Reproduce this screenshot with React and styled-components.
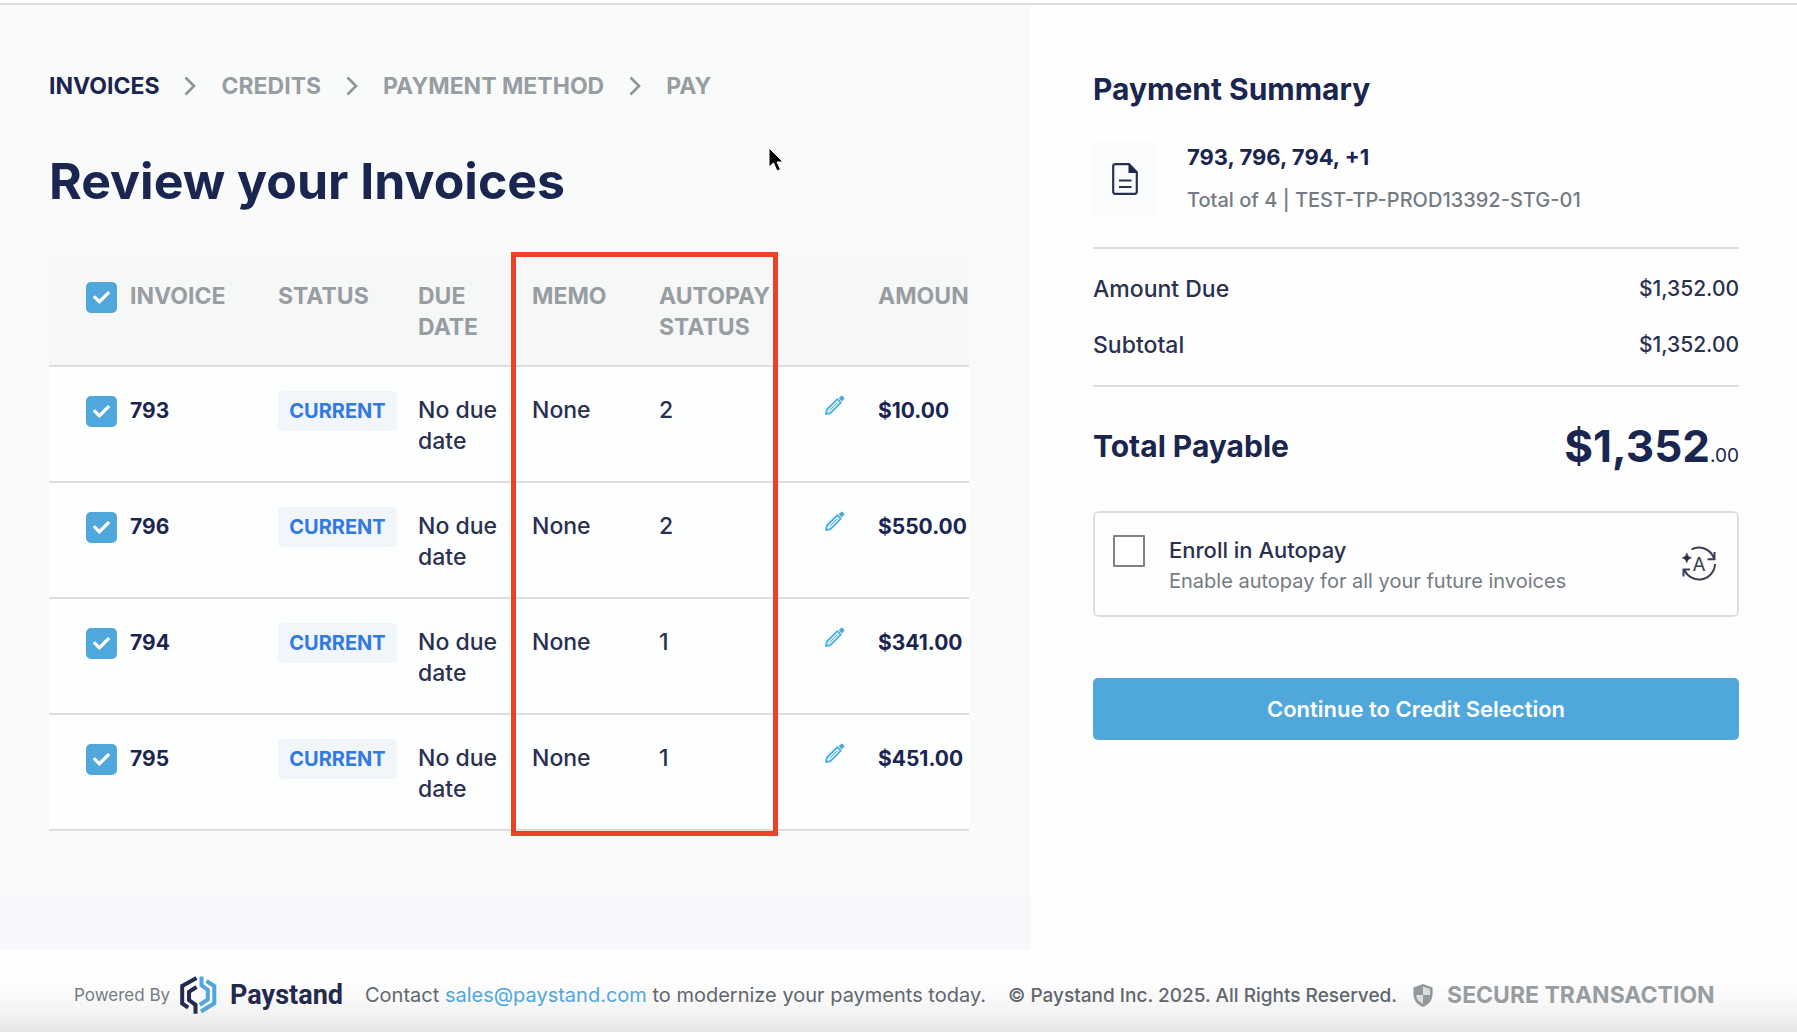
import { useState } from "react";
import styled, { createGlobalStyle, css, ThemeProvider } from "styled-components";
import { FaCheck } from "react-icons/fa";

const theme = {
  navy: "#1a2550",
  text: "#2a3050",
  muted: "#989da2",
  gray: "#757b82",
  blue: "#50a7dc",
  line: "#dcdede",
};

const steps = ["INVOICES", "CREDITS", "PAYMENT METHOD", "PAY"];

const invoices = [
  { id: "793", memo: "None", autopay: "2", amount: "$10.00" },
  { id: "796", memo: "None", autopay: "2", amount: "$550.00" },
  { id: "794", memo: "None", autopay: "1", amount: "$341.00" },
  { id: "795", memo: "None", autopay: "1", amount: "$451.00" },
];

export default function App() {
  const [selected, setSelected] = useState(invoices.map(({ id }) => id));
  const [autopay, setAutopay] = useState(false);
  const allSelected = selected.length === invoices.length;

  const toggle = (id) =>
    setSelected(
      selected.includes(id)
        ? selected.filter((item) => item !== id)
        : [...selected, id]
    );

  const toggleAll = () =>
    setSelected(allSelected ? [] : invoices.map(({ id }) => id));

  return (
    <ThemeProvider theme={theme}>
      <GlobalStyle />
      <WrapperElement>
        <MainElement>
          <ReviewSection>
            <ReviewContent>
              <StepsNav aria-label="Steps">
                {steps.map((step, index) => (
                  <Step key={step} $active={index === 0}>
                    {index > 0 && <ChevronIcon />}
                    {step}
                  </Step>
                ))}
              </StepsNav>
              <Title>Review your Invoices</Title>
              <TableArea>
                <TableScroll>
                  <Table>
                    <colgroup>
                      <Col $width={81} />
                      <Col $width={148} />
                      <Col $width={140} />
                      <Col $width={114} />
                      <Col $width={127} />
                      <Col $width={166} />
                      <Col $width={53} />
                      <Col $width={140} />
                    </colgroup>
                    <thead>
                      <tr>
                        <HeadCell $first>
                          <Checkbox
                            label="Select all invoices"
                            checked={allSelected}
                            onChange={toggleAll}
                          />
                        </HeadCell>
                        <HeadCell>INVOICE</HeadCell>
                        <HeadCell>STATUS</HeadCell>
                        <HeadCell>
                          DUE
                          <br />
                          DATE
                        </HeadCell>
                        <HeadCell>MEMO</HeadCell>
                        <HeadCell>
                          AUTOPAY
                          <br />
                          STATUS
                        </HeadCell>
                        <HeadCell />
                        <HeadCell>AMOUNT</HeadCell>
                      </tr>
                    </thead>
                    <tbody>
                      {invoices.map(({ id, memo, autopay, amount }) => (
                        <tr key={id}>
                          <Cell $first>
                            <Checkbox
                              label={`Select invoice ${id}`}
                              checked={selected.includes(id)}
                              onChange={() => toggle(id)}
                            />
                          </Cell>
                          <Cell $bold>{id}</Cell>
                          <Cell $tight>
                            <Badge>CURRENT</Badge>
                          </Cell>
                          <Cell>
                            No due
                            <br />
                            date
                          </Cell>
                          <Cell>{memo}</Cell>
                          <Cell>{autopay}</Cell>
                          <Cell $tight>
                            <EditButton aria-label={`Edit invoice ${id}`}>
                              <PencilIcon />
                            </EditButton>
                          </Cell>
                          <Cell $bold>{amount}</Cell>
                        </tr>
                      ))}
                    </tbody>
                  </Table>
                </TableScroll>
                <Highlight />
              </TableArea>
              <Pointer viewBox="0 0 16 25">
                <path
                  d="M1 1v19l4.500-4 3.500 8 3.500-1.500-3.500-7.500h6z"
                  fill="#000"
                  stroke="#fff"
                  strokeWidth="1"
                />
              </Pointer>
            </ReviewContent>
          </ReviewSection>
          <SummarySection>
            <SummaryTitle>Payment Summary</SummaryTitle>
            <InvoiceInfo>
              <InvoiceTile>
                <DocumentIcon />
              </InvoiceTile>
              <div>
                <InvoiceNumbers>793, 796, 794, +1</InvoiceNumbers>
                <InvoiceTotal>Total of 4 | TEST-TP-PROD13392-STG-01</InvoiceTotal>
              </div>
            </InvoiceInfo>
            <Amounts>
              <AmountRow>
                <dt>Amount Due</dt>
                <dd>$1,352.00</dd>
              </AmountRow>
              <AmountRow>
                <dt>Subtotal</dt>
                <dd>$1,352.00</dd>
              </AmountRow>
            </Amounts>
            <TotalRow>
              <TotalLabel>Total Payable</TotalLabel>
              <TotalValue>
                $1,352<Cents>.00</Cents>
              </TotalValue>
            </TotalRow>
            <AutopayCard>
              <AutopayCheck
                type="checkbox"
                id="autopay"
                checked={autopay}
                onChange={() => setAutopay(!autopay)}
              />
              <AutopayLabel htmlFor="autopay">
                Enroll in Autopay
                <AutopayHint>Enable autopay for all your future invoices</AutopayHint>
              </AutopayLabel>
              <AutopayIcon />
            </AutopayCard>
            <ContinueButton>Continue to Credit Selection</ContinueButton>
          </SummarySection>
        </MainElement>
        <FooterElement>
          <Powered>
            Powered By
            <PaystandIcon />
            <Wordmark>Paystand</Wordmark>
          </Powered>
          <Contact>
            Contact <a href="mailto:sales@paystand.com">sales@paystand.com</a> to
            modernize your payments today.
          </Contact>
          <Legal>
            <Copyright>© Paystand Inc. 2025. All Rights Reserved.</Copyright>
            <Secure>
              <ShieldIcon />
              SECURE TRANSACTION
            </Secure>
          </Legal>
        </FooterElement>
      </WrapperElement>
    </ThemeProvider>
  );
}

function Checkbox({ label, ...props }) {
  return (
    <CheckboxWrapper>
      <input type="checkbox" aria-label={label} {...props} />
      {props.checked && <FaCheck />}
    </CheckboxWrapper>
  );
}

// Icons
function ChevronIcon() {
  return (
    <svg width="12" height="20" viewBox="0 0 12 20" fill="none">
      <path d="M1.500 1.500l8.500 8.500-8.500 8.500" stroke="#8f9499" strokeWidth="2.600" />
    </svg>
  );
}

function PencilIcon() {
  return (
    <svg width="20" height="20" viewBox="0 0 20 20">
      <path
        d="M12.300 4.200l3.500 3.500L5.500 18.100l-4.500.9.900-4.500z"
        fill="#e3f4fc"
        stroke="#50b0de"
        strokeWidth="1.800"
        strokeLinejoin="round"
      />
      <path d="M4.500 15.500l8-8" stroke="#50b0de" strokeWidth="1" />
      <path d="M13.700 3.200L16 .9q.7-.7 1.500 0l1.600 1.600q.8.800 0 1.600l-2.300 2.300z" fill="#50a7dc" />
    </svg>
  );
}

function DocumentIcon() {
  return (
    <svg width="26" height="32" viewBox="0 0 26 32" fill="none" stroke="#2a3050">
      <path
        d="M3 1.200h14l7.800 8v19.600q0 2-2 2H3.200q-2 0-2-2V3.200q0-2 2-2z"
        strokeWidth="2.200"
      />
      <path d="M16.500 1l8.500 9h-8.500z" fill="#1a2550" stroke="none" />
      <path d="M7 17.500h12.500M7 24h12.500" strokeWidth="2.200" />
    </svg>
  );
}

function AutopayIcon() {
  return (
    <svg width="35" height="36" viewBox="0 0 35 36" fill="none" stroke="#3a3f52">
      <path d="M9.500 3.400A16 16 0 0 1 32 12.500" strokeWidth="2" />
      <path d="M32.500 6v7.200h-7" strokeWidth="2" />
      <path d="M33 18A16 16 0 0 1 2.400 24" strokeWidth="2" />
      <path d="M1.500 30.500v-7h6.500" strokeWidth="2" />
      <path d="M4.800 7q.6 4.200 4.600 4.900-4 .7-4.600 4.900-.6-4.200-4.600-4.900 4-.7 4.600-4.900z" fill="#252a42" stroke="#252a42" strokeWidth=".6" />
      <text
        x="17"
        y="25"
        textAnchor="middle"
        fontFamily="Inter, sans-serif"
        fontSize="19"
        fill="#3a3f52"
        stroke="none"
      >
        A
      </text>
    </svg>
  );
}

function PaystandIcon() {
  return (
    <svg width="37" height="38" viewBox="0 0 37 38" fill="none" strokeWidth="4">
      <path d="M16.500 2L2.200 10v17.500l6 4.200" stroke="#232a4e" />
      <path d="M16.500 11L9 15.800v8.200l6.500 4.800v9" stroke="#232a4e" />
      <path d="M21.500.5v8.700l6.300 4.800v9.500l-8 5.200" stroke="#50a7dc" />
      <path d="M26.500 5l7.800 5v17.300L21 35.500" stroke="#50a7dc" />
    </svg>
  );
}

function ShieldIcon() {
  return (
    <svg width="20" height="23" viewBox="0 0 20 23">
      <path d="M10 0l9.600 3.500v7q0 8.500-9.600 12.500Q.4 19 .4 10.500v-7z" fill="#92989b" />
      <path d="M10 2.500l7 2.600V11h-7zM3 11h7v9q-6.500-3-7-9z" fill="#d9dcdd" />
    </svg>
  );
}

const GlobalStyle = createGlobalStyle`
  * {
    box-sizing: border-box;
  }

  body {
    margin: 0;
    background: #fefefe;
    font-family: Inter, sans-serif;
    color: #2a3050;
  }

  svg {
    flex-shrink: 0;
  }
`;

const WrapperElement = styled.div`
  min-height: 100vh;
  display: flex;
  flex-direction: column;
  padding-top: 3px;
`;

const MainElement = styled.main`
  flex: 1;
  display: grid;
  grid-template-columns: 1031fr 766fr;
  border-top: solid 2px ${({ theme }) => theme.line};
`;

// Section Review
const ReviewSection = styled.section`
  min-width: 0;
  background: #f7f8fb;
`;

const ReviewContent = styled.div`
  position: relative;
  padding: 65px 62px 64px 49px;
  background: #f9fbfb;
`;

const StepsNav = styled.nav`
  display: flex;
  gap: 25px;
`;

const Step = styled.span`
  display: flex;
  align-items: center;
  gap: 25px;
  font-size: 23px;
  font-weight: 700;
  line-height: 32px;
  color: ${({ theme }) => theme.muted};

  ${({ $active }) =>
    $active &&
    css`
      color: ${({ theme }) => theme.navy};
    `}
`;

const Title = styled.h1`
  margin: 49px 0 46px;
  font-size: 50px;
  font-weight: 700;
  line-height: 60px;
  color: ${({ theme }) => theme.navy};
`;

const TableArea = styled.div`
  position: relative;
`;

const TableScroll = styled.div`
  overflow: hidden;
`;

const Table = styled.table`
  width: 969px;
  table-layout: fixed;
  border-collapse: separate;
  border-spacing: 0;
  line-height: 31px;
`;

const Col = styled.col`
  width: ${({ $width }) => $width}px;
`;

const HeadCell = styled.th`
  padding: 24px 0 22px ${({ $first }) => ($first ? 37 : 0)}px;
  background: #f6f7f7;
  border-bottom: solid 2px ${({ theme }) => theme.line};
  color: ${({ theme }) => theme.muted};
  font-size: 23px;
  font-weight: 700;
  text-align: left;
  vertical-align: top;
`;

const Cell = styled.td`
  padding: ${({ $tight }) => ($tight ? 24 : 28)}px 0
    ${({ $tight }) => ($tight ? 20 : 24)}px ${({ $first }) => ($first ? 37 : 0)}px;
  background: #fdfefe;
  border-bottom: solid 2px ${({ theme }) => theme.line};
  color: ${({ theme, $bold }) => ($bold ? theme.navy : theme.text)};
  font-size: ${({ $bold }) => ($bold ? 21 : 23)}px;
  font-weight: ${({ $bold }) => ($bold ? 700 : 500)};
  vertical-align: top;
`;

const CheckboxWrapper = styled.span`
  display: grid;
  width: 31px;
  margin-top: 1px;
  place-items: center;

  & > * {
    grid-area: 1 / 1;
  }

  & > input {
    appearance: none;
    width: 31px;
    height: 31px;
    margin: 0;
    border: solid 2px ${({ theme }) => theme.blue};
    border-radius: 5px;
    background: #fff;
  }

  & > input:checked {
    background: ${({ theme }) => theme.blue};
  }

  & > svg {
    font-size: 17px;
    fill: #fff;
    pointer-events: none;
  }
`;

const Badge = styled.span`
  display: block;
  width: 119px;
  border-radius: 4px;
  background: #f1f6fa;
  color: #3279e4;
  font-size: 20px;
  font-weight: 700;
  line-height: 40px;
  text-align: center;
`;

const EditButton = styled.button`
  display: flex;
  padding: 4px 0;
  border: none;
  background: transparent;
`;

// Outline over the memo and autopay columns
const Highlight = styled.div`
  position: absolute;
  top: -5px;
  left: 462px;
  width: 267px;
  bottom: -5px;
  border: solid 5px #ec4124;
  pointer-events: none;
`;

const Pointer = styled.svg`
  position: absolute;
  top: 142px;
  left: 768px;
  width: 16px;
  height: 25px;
`;

// Section Summary
const SummarySection = styled.section`
  padding: 66px 58px 40px 62px;
`;

const SummaryTitle = styled.h2`
  margin: 0;
  color: ${({ theme }) => theme.navy};
  font-size: 30px;
  font-weight: 700;
  line-height: 36px;
`;

const InvoiceInfo = styled.div`
  display: flex;
  align-items: center;
  gap: 31px;
  padding: 29px 0 25px;
  border-bottom: solid 2px ${({ theme }) => theme.line};
`;

const InvoiceTile = styled.div`
  width: 63px;
  height: 74px;
  display: flex;
  justify-content: center;
  align-items: center;
  background: #f9fbfc;
`;

const InvoiceNumbers = styled.div`
  color: ${({ theme }) => theme.navy};
  font-size: 22px;
  font-weight: 700;
  line-height: 43px;
`;

const InvoiceTotal = styled.div`
  color: ${({ theme }) => theme.gray};
  font-size: 20px;
  font-weight: 500;
  line-height: 43px;
`;

const Amounts = styled.dl`
  margin: 0;
  padding: 12px 0;
  border-bottom: solid 2px ${({ theme }) => theme.line};
`;

const AmountRow = styled.div`
  display: flex;
  justify-content: space-between;
  font-size: 23px;
  font-weight: 500;
  line-height: 56px;

  & > dd {
    margin: 0;
    font-size: 21px;
  }
`;

const TotalRow = styled.div`
  display: flex;
  justify-content: space-between;
  align-items: center;
  margin: 28px 0 34px;
  color: ${({ theme }) => theme.navy};
  line-height: 62px;
`;

const TotalLabel = styled.span`
  font-size: 30px;
  font-weight: 700;
`;

const TotalValue = styled.span`
  font-size: 44px;
  font-weight: 700;
`;

const Cents = styled.span`
  font-size: 19px;
  font-weight: 400;
  line-height: 1;
`;

const AutopayCard = styled.div`
  display: flex;
  align-items: center;
  gap: 24px;
  padding: 22px 20px 18px 18px;
  border: solid 2px ${({ theme }) => theme.line};
  border-radius: 6px;

  & > svg {
    margin-bottom: 4px;
  }
`;

const AutopayCheck = styled.input`
  appearance: none;
  align-self: flex-start;
  width: 32px;
  height: 32px;
  margin: 0;
  border: solid 2px #7f8286;
  border-radius: 1px;
  background: #fff;

  &:checked {
    background: ${({ theme }) => theme.blue};
  }
`;

const AutopayLabel = styled.label`
  flex: 1;
  font-size: 22px;
  font-weight: 500;
  line-height: 31px;
`;

const AutopayHint = styled.span`
  display: block;
  color: ${({ theme }) => theme.gray};
  font-size: 20px;
  font-weight: 400;
`;

const ContinueButton = styled.button`
  width: 100%;
  height: 62px;
  margin-top: 61px;
  border: none;
  border-radius: 5px;
  background: ${({ theme }) => theme.blue};
  color: #fff;
  font-family: inherit;
  font-size: 22px;
  font-weight: 600;
`;

// Section Footer
const FooterElement = styled.footer`
  display: flex;
  align-items: center;
  gap: 22px;
  height: 82px;
  padding: 8px 74px 0;
  background: linear-gradient(#fefefe 40%, #f4f4f4 75%, #e4e4e4);
  white-space: nowrap;
`;

const Powered = styled.div`
  display: flex;
  align-items: center;
  gap: 10px;
  color: ${({ theme }) => theme.gray};
  font-size: 17px;

  & > svg {
    margin-right: 3px;
  }
`;

const Wordmark = styled.span`
  color: #232a4e;
  font-family: Roboto, sans-serif;
  font-size: 27px;
  font-weight: 700;
`;

const Contact = styled.span`
  color: #60666e;
  font-size: 20px;

  & > a {
    color: ${({ theme }) => theme.blue};
    text-decoration: none;
  }
`;

const Legal = styled.div`
  display: flex;
  align-items: center;
  gap: 16px;
`;

const Copyright = styled.span`
  color: #60666e;
  font-size: 19px;
  font-weight: 500;
`;

const Secure = styled.div`
  display: flex;
  align-items: center;
  gap: 14px;
  color: ${({ theme }) => theme.muted};
  font-size: 23px;
  font-weight: 700;
`;
